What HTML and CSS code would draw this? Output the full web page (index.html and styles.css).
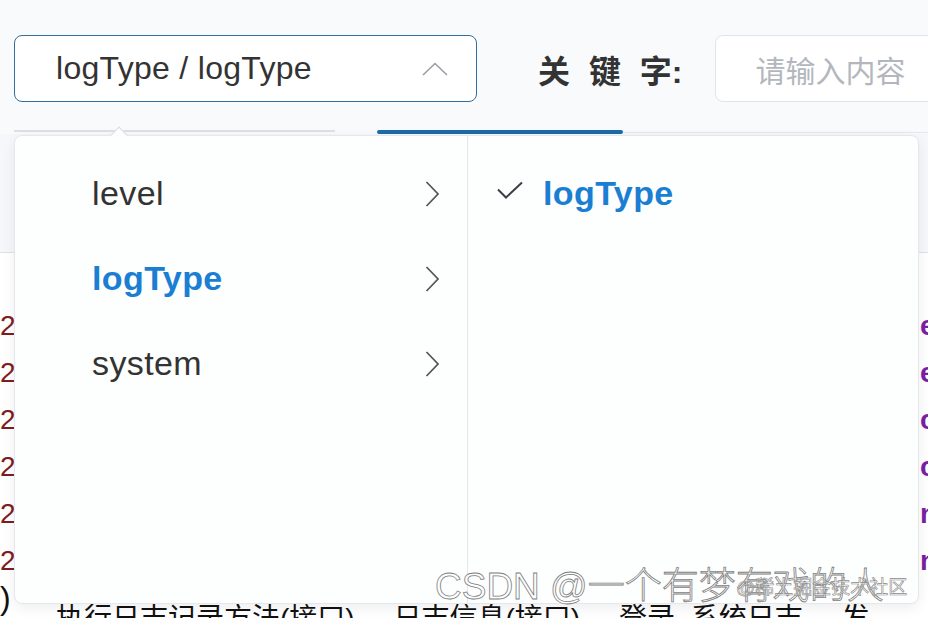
FILE: index.html
```html
<!DOCTYPE html>
<html lang="zh-CN">
<head>
    <meta charset="UTF-8">
    <meta name="viewport" content="width=device-width, initial-scale=1.0">
    <title>日志查询</title>
    <link rel="stylesheet" href="styles.css">
</head>
<body>

    <!-- 查询条件 -->
    <div class="toolbar">
        <div class="cascader is-focus">
            <span class="cascader-value">logType / logType</span>
            <svg class="arrow-up" width="26" height="14" viewBox="0 0 26 14"><path d="M1 13 L13 1.5 L25 13"/></svg>
        </div>
        <label class="field-label">关 键 字:</label>
        <div class="text-input"><span class="placeholder">请输入内容</span></div>
    </div>

    <!-- 标签栏 -->
    <div class="tabs">
        <div class="tab-line"></div>
        <div class="tab-active"></div>
        <div class="tab-rest"></div>
    </div>

    <!-- 日志表格（被下拉框遮住） -->
    <div class="log-table">
        <div class="table-head"></div>
        <div class="table-body">
            <div class="table-row"><span class="cell-date">2023-05-12 10:21:33</span><span class="cell-type">error</span></div>
            <div class="table-row"><span class="cell-date">2023-05-12 10:20:18</span><span class="cell-type">error</span></div>
            <div class="table-row"><span class="cell-date">2023-05-12 10:18:02</span><span class="cell-type">create</span></div>
            <div class="table-row"><span class="cell-date">2023-05-12 10:16:47</span><span class="cell-type">create</span></div>
            <div class="table-row"><span class="cell-date">2023-05-12 10:15:11</span><span class="cell-type">normal</span></div>
            <div class="table-row"><span class="cell-date">2023-05-12 10:12:56</span><span class="cell-type">normal</span></div>
            <div class="table-row last-row"><span class="cell-end">)</span><span class="cell-text">执行日志记录方法(接口)&nbsp;&nbsp;&nbsp;&nbsp;&nbsp;日志信息(接口)&nbsp;&nbsp;&nbsp;&nbsp;&nbsp;登录_系统日志&nbsp;&nbsp;&nbsp;&nbsp;&nbsp;发</span></div>
        </div>
    </div>

    <!-- 级联下拉面板 -->
    <div class="cascader-panel">
        <span class="popper-arrow"></span>
        <ul class="cascader-menu">
            <li class="menu-item">
                <span>level</span>
                <svg class="arrow-right" width="14" height="26" viewBox="0 0 14 26"><path d="M1.5 1 L13 13 L1.5 25"/></svg>
            </li>
            <li class="menu-item is-active">
                <span>logType</span>
                <svg class="arrow-right" width="14" height="26" viewBox="0 0 14 26"><path d="M1.5 1 L13 13 L1.5 25"/></svg>
            </li>
            <li class="menu-item">
                <span>system</span>
                <svg class="arrow-right" width="14" height="26" viewBox="0 0 14 26"><path d="M1.5 1 L13 13 L1.5 25"/></svg>
            </li>
        </ul>
        <ul class="cascader-menu sub-menu">
            <li class="menu-item is-active is-checked">
                <svg class="check" width="26" height="18" viewBox="0 0 26 18"><path d="M1 8.5 L9 16.5 L25 1.5"/></svg>
                <span>logType</span>
            </li>
        </ul>
    </div>

    <!-- 水印 -->
    <div class="watermark">CSDN @一个有梦有戏的人</div>
    <div class="watermark-sub">@稀土掘金技术社区</div>

</body>
</html>
```

FILE: styles.css
```css
body, html {
    margin: 0;
    padding: 0;
    width: 928px;
    height: 618px;
    overflow: hidden;
    background-color: #f8fafc;
    font-family: "Liberation Sans", "Noto Sans CJK SC", sans-serif;
    color: #333;
}

body {
    position: relative;
}

/* 查询条件 */
.toolbar {
    display: flex;
    align-items: center;
    padding: 35px 0 0 14px;
    white-space: nowrap;
}

.toolbar > * {
    flex-shrink: 0;
}

.cascader {
    box-sizing: border-box;
    width: 463px;
    height: 67px;
    display: flex;
    align-items: center;
    justify-content: space-between;
    padding: 0 28px 0 41px;
    background-color: #fff;
    border: 1.5px solid #dcdfe6;
    border-radius: 8px;
    font-size: 32px;
    letter-spacing: 0.3px;
}

.cascader.is-focus {
    border-color: #336f9c;
}

.arrow-up path {
    fill: none;
    stroke: #9a9ea5;
    stroke-width: 1.6;
}

.field-label {
    margin-left: 61px;
    font-size: 32px;
    font-weight: bold;
    word-spacing: 10px;
    color: #333;
}

.text-input {
    box-sizing: border-box;
    width: 260px;
    height: 67px;
    margin-left: 33px;
    display: flex;
    align-items: center;
    padding-left: 39px;
    background-color: #fff;
    border: 1px solid #e1e4e9;
    border-radius: 8px;
}

.placeholder {
    font-size: 30px;
    color: #b3b7bd;
    white-space: nowrap;
}

/* 标签栏 */
.tabs {
    display: flex;
    align-items: flex-start;
    margin-top: 28px;
    padding-left: 14px;
    height: 4px;
}

.tab-line {
    width: 321px;
    height: 2px;
    background-color: #dcdfe4;
}

.tab-active {
    width: 246px;
    height: 4px;
    margin-left: 42px;
    background-color: #1b6ca8;
    border-radius: 2px;
}

.tab-rest {
    flex: 1;
    height: 1px;
    margin-top: 2px;
    background-color: #e4e7ed;
}

/* 日志表格 */
.table-head {
    height: 118px;
    background-color: #f5f7fa;
    border-bottom: 1px solid #dfe2e7;
}

.table-body {
    padding-top: 49px;
    background-color: #fff;
}

.table-row {
    display: flex;
    align-items: center;
    height: 47px;
    font-size: 28px;
    white-space: nowrap;
}

.cell-date {
    flex: 0 0 920px;
    overflow: hidden;
    color: #7e1d1d;
}

.cell-type {
    color: #7b1fa2;
    font-weight: bold;
}

.last-row {
    height: 36px;
    align-items: flex-start;
}

.cell-end {
    flex: 0 0 56px;
    font-size: 32px;
    line-height: 28px;
    color: #111;
}

.cell-text {
    padding-top: 12px;
    font-size: 28px;
    color: #111;
}

/* 级联下拉面板 */
.cascader-panel {
    position: absolute;
    left: 14px;
    top: 135px;
    box-sizing: border-box;
    width: 905px;
    height: 469px;
    display: flex;
    background-color: #fdfefe;
    border: 1px solid #e4e7ed;
    border-radius: 8px;
    box-shadow: 0 4px 14px rgba(0, 0, 0, 0.07);
}

.popper-arrow {
    position: absolute;
    left: 98px;
    top: -7px;
    width: 11px;
    height: 11px;
    background-color: #fdfefe;
    border-top: 1px solid #d9dce1;
    border-left: 1px solid #d9dce1;
    transform: rotate(45deg);
}

.cascader-menu {
    list-style: none;
    margin: 0;
    padding: 15px 0;
    width: 452px;
    border-right: 1px solid #e4e7ed;
}

.sub-menu {
    flex: 1;
    border-right: none;
}

.menu-item {
    display: flex;
    align-items: center;
    justify-content: space-between;
    height: 85px;
    padding: 0 28px 0 77px;
    font-size: 34px;
    letter-spacing: 0.4px;
    color: #333;
}

.menu-item.is-active {
    color: #1a7fd2;
    font-weight: bold;
}

.sub-menu .menu-item {
    justify-content: flex-start;
    padding-left: 29px;
    margin-top: -15px;
    height: 115px;
}

.arrow-right path {
    fill: none;
    stroke: #555;
    stroke-width: 1.7;
}

.check {
    margin-right: 20px;
    margin-top: -8px;
}

.check path {
    fill: none;
    stroke: #3a3f45;
    stroke-width: 2;
}

/* 水印 */
.watermark {
    position: absolute;
    left: 435px;
    top: 556px;
    font-size: 37px;
    font-weight: 300;
    white-space: nowrap;
    color: rgba(255, 255, 255, 0.7);
    -webkit-text-stroke: 0.8px #7d7d7d;
}

.watermark-sub {
    position: absolute;
    left: 736px;
    top: 572px;
    font-size: 19px;
    white-space: nowrap;
    color: rgba(255, 255, 255, 0.5);
    -webkit-text-stroke: 0.6px #8a8a8a;
}
```
